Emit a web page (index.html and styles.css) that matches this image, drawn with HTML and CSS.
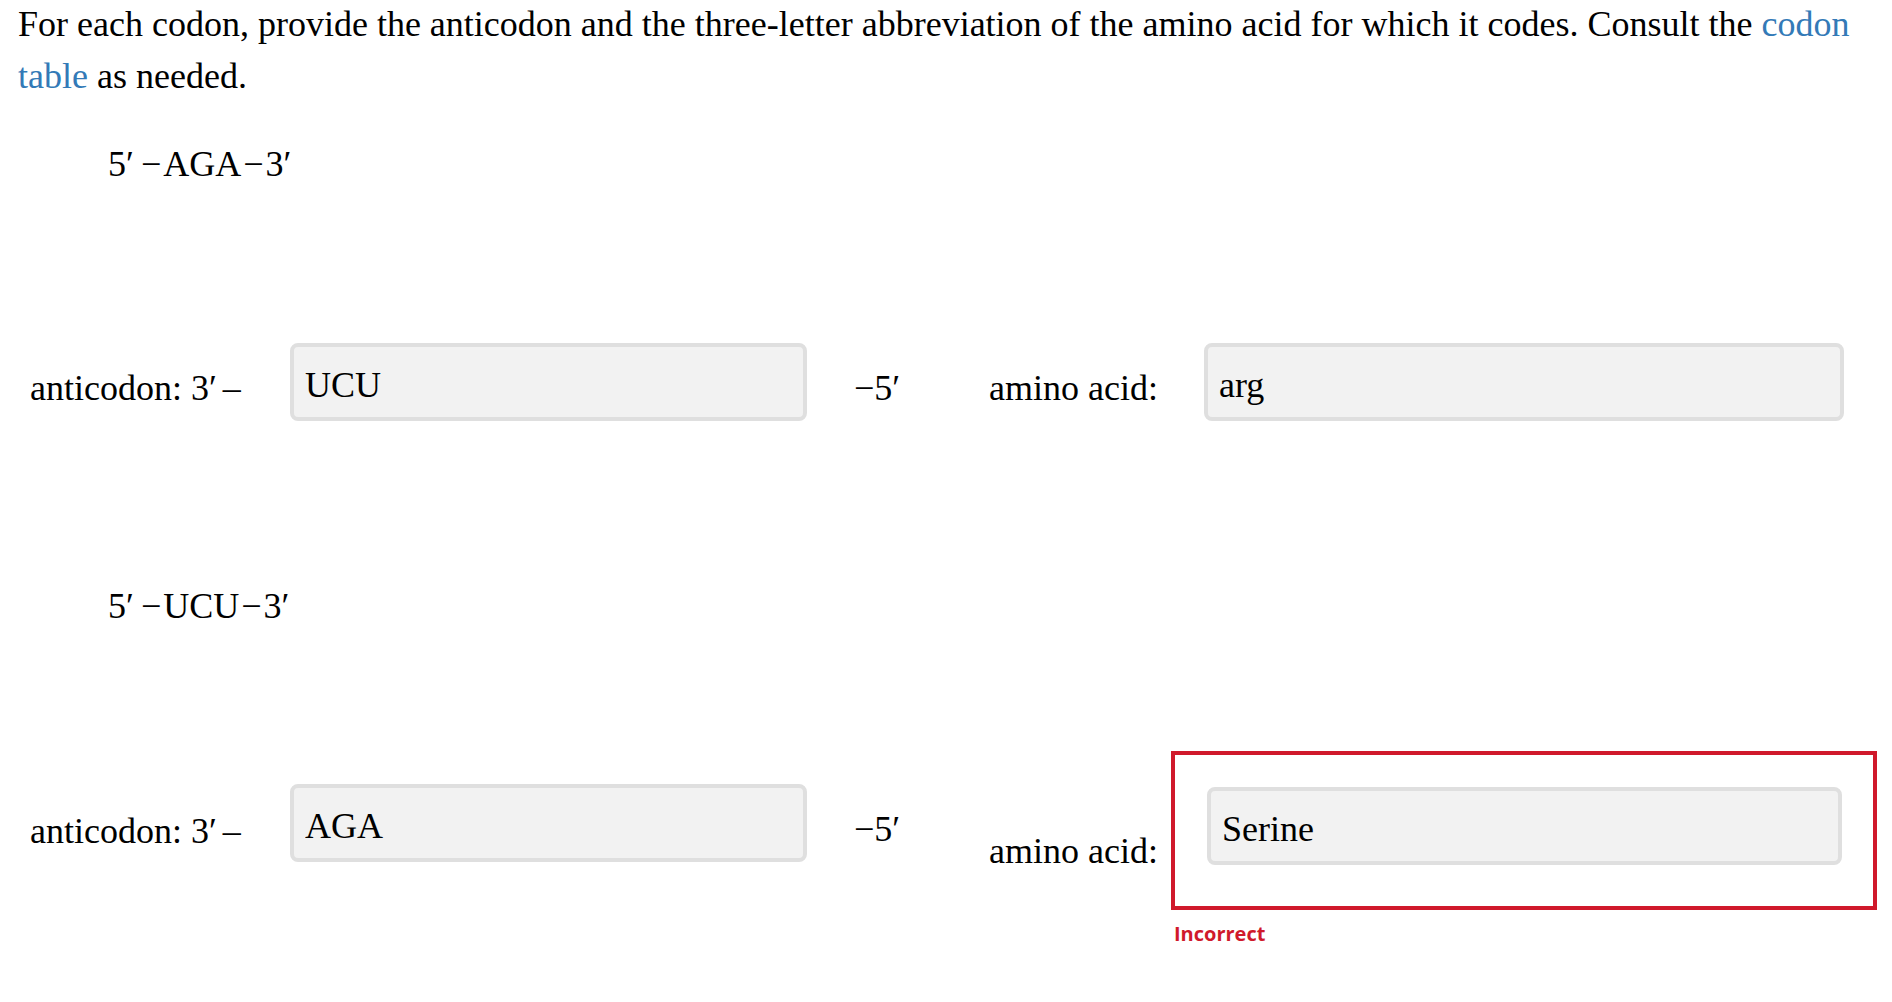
FILE: index.html
```html
<!DOCTYPE html>
<html lang="en">
<head>
<meta charset="utf-8">
<title>Codons</title>
<link rel="stylesheet" href="styles.css">
</head>
<body>
<p class="intro">For each codon, provide the anticodon and the three-letter abbreviation of the amino acid for which it codes. Consult the <a class="link" href="#">codon</a> <a class="link" href="#">table</a> as needed.</p>

<section class="item item-first">
  <div class="codon">5′<span class="m m-first">−</span>AGA<span class="m">−</span>3′</div>
  <div class="row row-plain">
    <span class="lbl">anticodon: 3′<span class="dash">–</span></span>
    <input class="field field-anti" type="text" value="UCU">
    <span class="sep">−5′</span>
    <span class="lbl2">amino acid:</span>
    <span class="cell"><input class="field field-amino" type="text" value="arg"></span>
  </div>
</section>

<section class="item item-second">
  <div class="codon">5′<span class="m m-first">−</span>UCU<span class="m">−</span>3′</div>
  <div class="row row-flagged">
    <span class="lbl">anticodon: 3′<span class="dash">–</span></span>
    <input class="field field-anti" type="text" value="AGA">
    <span class="sep">−5′</span>
    <span class="lbl2">amino acid:</span>
    <div class="cell-flagged">
      <div class="redbox"><input class="field field-amino-in" type="text" value="Serine"></div>
      <div class="incorrect">Incorrect</div>
    </div>
  </div>
</section>
</body>
</html>
```

FILE: styles.css
```css
html, body {
  margin: 0;
  padding: 0;
  background: #ffffff;
}

body {
  font-family: "Liberation Serif", "Times New Roman", serif;
  font-size: 36px;
  color: #000000;
  width: 1892px;
  overflow: hidden;
}

.intro {
  margin: -2px 0 0 18px;
  line-height: 52px;
}

.link {
  color: #337ab7;
  text-decoration: none;
}

.codon {
  margin-left: 108px;
  line-height: 40px;
  white-space: nowrap;
}

.m {
  margin: 0 2px;
}

.m-first {
  margin-left: 7px;
}

.item-first .codon {
  margin-top: 42px;
}

.item-second .codon {
  margin-top: 165px;
}

.row {
  display: flex;
  align-items: flex-start;
  padding-left: 30px;
}

.row-plain {
  margin-top: 159px;
}

.row-flagged {
  margin-top: 125px;
}

.lbl, .sep, .lbl2 {
  line-height: 40px;
  white-space: nowrap;
  flex-shrink: 0;
}

.lbl {
  width: 260px;
}

.dash {
  margin-left: 6px;
}

.sep {
  margin-left: 47px;
  width: 135px;
}

.lbl2 {
  width: 182px;
}

.row-plain .lbl,
.row-plain .sep,
.row-plain .lbl2 {
  margin-top: 25px;
}

.row-flagged .lbl { margin-top: 60px; }
.row-flagged .field-anti { margin-top: 33px; }
.row-flagged .sep { margin-top: 58px; }
.row-flagged .lbl2 { margin-top: 80px; }

.field {
  box-sizing: border-box;
  display: block;
  flex-shrink: 0;
  height: 78px;
  margin: 0;
  padding: 5px 11px 0 11px;
  border: 4px solid #dfdfdf;
  border-radius: 8px;
  background: #f2f2f2;
  font-family: "Liberation Serif", "Times New Roman", serif;
  font-size: 36px;
  color: #000000;
  outline: none;
}

.field-anti {
  width: 517px;
}

.cell {
  display: block;
  padding-left: 33px;
}

.field-amino {
  width: 640px;
}

.cell-flagged {
  display: flex;
  flex-direction: column;
}

.redbox {
  box-sizing: border-box;
  width: 706px;
  height: 159px;
  border: 4px solid #d0192b;
  padding: 32px 31px 41px 32px;
}

.field-amino-in {
  width: 635px;
}

.incorrect {
  margin-top: 10px;
  margin-left: 3px;
  font-family: "Open Sans", "Liberation Sans", sans-serif;
  font-weight: 700;
  font-size: 20px;
  line-height: 28px;
  color: #d0192b;
}
```
